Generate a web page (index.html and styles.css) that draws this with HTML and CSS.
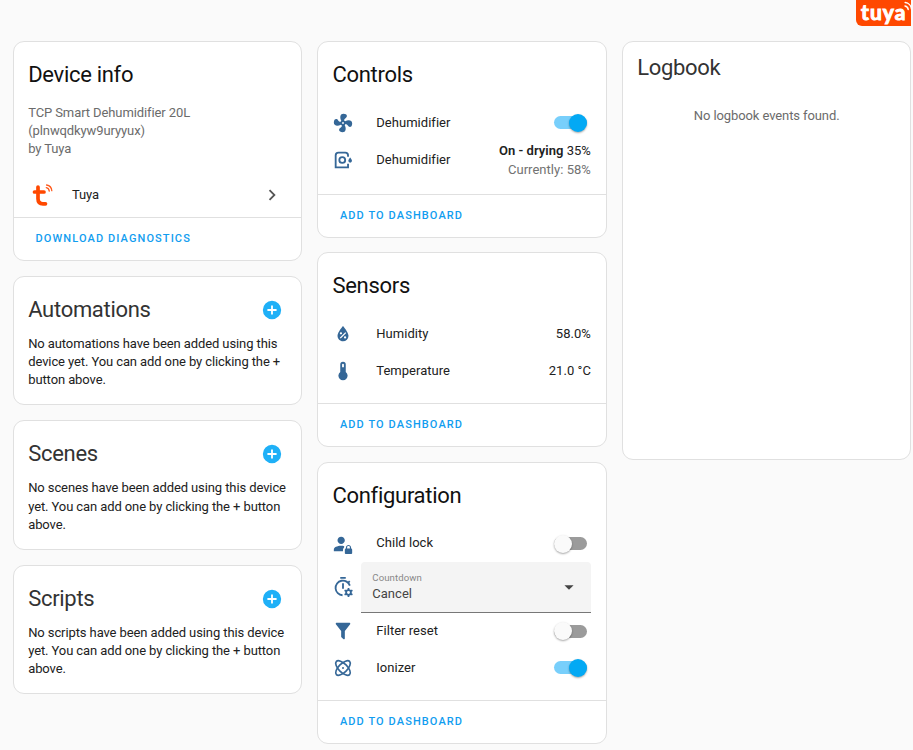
FILE: index.html
```
<!DOCTYPE html>
<html lang="en">

<head>
    <meta charset="utf-8">
    <meta name="viewport" content="width=device-width, initial-scale=1.0">
    <title>TCP Smart Dehumidifier 20L</title>
    <link rel="stylesheet" href="styles.css">
</head>

<body>

    <header class="brand">
        <div class="brand-logo">
            <span class="brand-text">tuya</span>
            <svg class="brand-waves" viewBox="0 0 10 12">
                <path d="M1 6a4 4 0 0 1 3.200 3.500M1.200 2.600a7 7 0 0 1 6.300 6.400" fill="none" stroke="#fff" stroke-width="1.5" stroke-linecap="round" />
            </svg>
        </div>
    </header>

    <main class="columns">
        <div class="column">
            <section class="card">
                <h1 class="title">Device info</h1>
                <div class="device">
                    <div>TCP Smart Dehumidifier 20L</div>
                    <div>(plnwqdkyw9uryyux)</div>
                    <div>by Tuya</div>
                </div>
                <a class="integration" href="#">
                    <svg class="tuya-icon" viewBox="0 0 22 24">
                        <path d="M2.5 9h9.5M6 4v11.800q0 5 5 5h2.500" fill="none" stroke="#ff4800" stroke-width="3.7" stroke-linecap="round" stroke-linejoin="round" />
                        <path d="M14.3 4.700q2.600.4 3 3.500M14.600 2q4.900.8 5.200 5.700" fill="none" stroke="#ff5a1c" stroke-width="1.3" stroke-linecap="round" />
                    </svg>
                    <span class="name">Tuya</span>
                    <svg class="icon chevron" viewBox="0 0 24 24"><path d="M8.59,16.58L13.17,12L8.59,7.41L10,6L16,12L10,18L8.59,16.58Z" /></svg>
                </a>
                <div class="actions"><a href="#">Download diagnostics</a></div>
            </section>

            <section class="card small">
                <h1 class="title soft">Automations
                    <svg class="icon add" viewBox="0 0 24 24"><path d="M17,13H13V17H11V13H7V11H11V7H13V11H17M12,2A10,10 0 0,0 2,12A10,10 0 0,0 12,22A10,10 0 0,0 22,12A10,10 0 0,0 12,2Z" /></svg>
                </h1>
                <p class="text">No automations have been added using this<br>device yet. You can add one by clicking the +<br>button above.</p>
            </section>

            <section class="card small">
                <h1 class="title soft">Scenes
                    <svg class="icon add" viewBox="0 0 24 24"><path d="M17,13H13V17H11V13H7V11H11V7H13V11H17M12,2A10,10 0 0,0 2,12A10,10 0 0,0 12,22A10,10 0 0,0 22,12A10,10 0 0,0 12,2Z" /></svg>
                </h1>
                <p class="text">No scenes have been added using this device<br>yet. You can add one by clicking the + button<br>above.</p>
            </section>

            <section class="card small">
                <h1 class="title soft">Scripts
                    <svg class="icon add" viewBox="0 0 24 24"><path d="M17,13H13V17H11V13H7V11H11V7H13V11H17M12,2A10,10 0 0,0 2,12A10,10 0 0,0 12,22A10,10 0 0,0 22,12A10,10 0 0,0 12,2Z" /></svg>
                </h1>
                <p class="text">No scripts have been added using this device<br>yet. You can add one by clicking the + button<br>above.</p>
            </section>
        </div>

        <div class="column">
            <section class="card">
                <h1 class="title">Controls</h1>
                <div class="rows">
                    <div class="row">
                        <svg class="icon" viewBox="0 0 24 24"><path d="M12,11A1,1 0 0,0 11,12A1,1 0 0,0 12,13A1,1 0 0,0 13,12A1,1 0 0,0 12,11M12.5,2C17,2 17.11,5.57 14.75,6.75C13.76,7.24 13.32,8.29 13.13,9.22C13.61,9.42 14.03,9.73 14.35,10.13C18.05,8.13 22.03,8.92 22.03,12.5C22.03,17 18.46,17.1 17.28,14.73C16.78,13.74 15.72,13.3 14.79,13.11C14.59,13.59 14.28,14 13.88,14.34C15.87,18.03 15.08,22 11.5,22C7,22 6.91,18.42 9.27,17.24C10.25,16.75 10.69,15.71 10.89,14.79C10.4,14.59 9.97,14.27 9.65,13.87C5.96,15.85 2,15.07 2,11.5C2,7 5.56,6.89 6.74,9.26C7.24,10.25 8.29,10.68 9.22,10.87C9.41,10.39 9.73,9.97 10.14,9.65C8.15,5.96 8.94,2 12.5,2Z" /></svg>
                        <span class="name">Dehumidifier</span>
                        <span class="switch on"></span>
                    </div>
                    <div class="row humidifier">
                        <svg class="icon" viewBox="0 0 24 24">
                            <path d="M17.500 8.500V7q0-3-3-3H7Q4 4 4 7v13h13.500v-4" fill="none" stroke="currentColor" stroke-width="2" />
                            <circle cx="11.200" cy="12" r="3.200" fill="none" stroke="currentColor" stroke-width="2" />
                            <path d="M19.800 9.300s-2 2.300-2 3.600a2 2 0 0 0 4 0c0-1.300-2-3.600-2-3.600" />
                        </svg>
                        <span class="name">Dehumidifier</span>
                        <div class="state">
                            <div><b>On - drying</b> 35%</div>
                            <div class="current">Currently: 58%</div>
                        </div>
                    </div>
                </div>
                <div class="actions"><a href="#">Add to dashboard</a></div>
            </section>

            <section class="card">
                <h1 class="title">Sensors</h1>
                <div class="rows">
                    <div class="row">
                        <svg class="icon" viewBox="0 0 24 24"><path d="M12,3.25C12,3.25 6,10 6,14C6,17.32 8.69,20 12,20A6,6 0 0,0 18,14C18,10 12,3.25 12,3.25M14.47,9.97L15.53,11.03L9.53,17.03L8.47,15.97M9.75,10A1.25,1.25 0 0,1 11,11.25A1.25,1.25 0 0,1 9.75,12.5A1.25,1.25 0 0,1 8.5,11.25A1.25,1.25 0 0,1 9.75,10M14.25,14.5A1.25,1.25 0 0,1 15.5,15.75A1.25,1.25 0 0,1 14.25,17A1.25,1.25 0 0,1 13,15.75A1.25,1.25 0 0,1 14.25,14.5Z" /></svg>
                        <span class="name">Humidity</span>
                        <span>58.0%</span>
                    </div>
                    <div class="row">
                        <svg class="icon" viewBox="0 0 24 24"><path d="M15 13V5A3 3 0 0 0 9 5V13A5 5 0 1 0 15 13M12 4A1 1 0 0 1 13 5V8H11V5A1 1 0 0 1 12 4Z" /></svg>
                        <span class="name">Temperature</span>
                        <span>21.0 °C</span>
                    </div>
                </div>
                <div class="actions"><a href="#">Add to dashboard</a></div>
            </section>

            <section class="card">
                <h1 class="title">Configuration</h1>
                <div class="rows">
                    <div class="row">
                        <svg class="icon" viewBox="0 0 24 24"><path d="M6 8C6 5.79 7.79 4 10 4S14 5.79 14 8 12.21 12 10 12 6 10.21 6 8M12 18.2C12 17.24 12.5 16.34 13.2 15.74V15.5C13.2 15.11 13.27 14.74 13.38 14.38C12.35 14.14 11.21 14 10 14C5.58 14 2 15.79 2 18V20H12V18.2M22 18.3V21.8C22 22.4 21.4 23 20.7 23H15.2C14.6 23 14 22.4 14 21.7V18.2C14 17.6 14.6 17 15.2 17V15.5C15.2 14.1 16.6 13 18 13C19.4 13 20.8 14.1 20.8 15.5V17C21.4 17 22 17.6 22 18.3M19.5 15.5C19.5 14.7 18.8 14.2 18 14.2C17.2 14.2 16.5 14.7 16.5 15.5V17H19.5V15.5Z" /></svg>
                        <span class="name">Child lock</span>
                        <span class="switch"></span>
                    </div>
                    <div class="row select-row">
                        <svg class="icon" viewBox="0 0 24 24">
                            <path d="M9 2h6M12 8v6M11.500 21A8 8 0 1 1 19.500 10.500M17.300 7.700l2-2" fill="none" stroke="currentColor" stroke-width="2" />
                            <circle cx="18" cy="18" r="2.600" fill="none" stroke="currentColor" stroke-width="2" />
                            <path d="M18 13v2.500M18 20.500V23M13.700 15.500l2.100 1.250M20.200 19.250l2.100 1.250M13.700 20.500l2.100-1.250M20.200 16.750l2.100-1.250" stroke="currentColor" stroke-width="1.900" />
                        </svg>
                        <div class="select">
                            <div class="select-value">
                                <div class="select-label">Countdown</div>
                                <div>Cancel</div>
                            </div>
                            <svg class="icon" viewBox="0 0 24 24"><path d="M7,10L12,15L17,10H7Z" /></svg>
                        </div>
                    </div>
                    <div class="row">
                        <svg class="icon" viewBox="0 0 24 24"><path d="M14,12V19.88C14.04,20.18 13.94,20.5 13.71,20.71C13.32,21.1 12.69,21.1 12.3,20.71L10.29,18.7C10.06,18.47 9.96,18.16 10,17.87V12H9.97L4.21,4.62C3.87,4.19 3.95,3.56 4.38,3.22C4.57,3.08 4.78,3 5,3V3H19V3C19.22,3 19.43,3.08 19.62,3.22C20.05,3.56 20.13,4.19 19.79,4.62L14.03,12H14Z" /></svg>
                        <span class="name">Filter reset</span>
                        <span class="switch"></span>
                    </div>
                    <div class="row">
                        <svg class="icon" viewBox="0 0 24 24">
                            <g fill="none" stroke="currentColor" stroke-width="1.800">
                                <ellipse cx="12" cy="12" rx="10.200" ry="4.700" transform="rotate(45 12 12)" />
                                <ellipse cx="12" cy="12" rx="10.200" ry="4.700" transform="rotate(-45 12 12)" />
                            </g>
                            <circle cx="12" cy="12" r="1.100" />
                        </svg>
                        <span class="name">Ionizer</span>
                        <span class="switch on"></span>
                    </div>
                </div>
                <div class="actions"><a href="#">Add to dashboard</a></div>
            </section>
        </div>

        <div class="column">
            <section class="card logbook">
                <h1 class="title soft">Logbook</h1>
                <p class="empty">No logbook events found.</p>
            </section>
        </div>
    </main>

</body>

</html>
```
FILE: styles.css
```
* {
    box-sizing: border-box;
}

body {
    margin: 0;
    height: 750px;
    overflow: hidden;
    background-color: #fafafa;
    color: #212121;
    font-family: Roboto, sans-serif;
    font-size: 13px;
    line-height: 18.2px;
    letter-spacing: -0.1px;
}

a {
    color: inherit;
    text-decoration: none;
}

.brand {
    display: flex;
    justify-content: flex-end;
    height: 41px;
    padding-right: 2px;
}

.brand-logo {
    display: flex;
    width: 55px;
    height: 26px;
    padding-left: 5px;
    background-color: #ff4800;
    border-radius: 0 0 0 6px;
}

.brand-text {
    color: #fff;
    font-family: Lato, sans-serif;
    font-size: 21px;
    font-weight: 700;
    line-height: 24px;
    letter-spacing: 1.1px;
    -webkit-text-stroke: 1px #fff;
}

.brand-waves {
    width: 10px;
    height: 12px;
    margin-left: -3px;
    flex-shrink: 0;
}

.columns {
    display: grid;
    grid-template-columns: 289px 290px 289px;
    column-gap: 15.3px;
    padding-left: 12.6px;
    align-items: start;
}

.column {
    display: flex;
    flex-direction: column;
    gap: 15px;
}

.card {
    background-color: #fff;
    border: 1px solid #e0e0e0;
    border-radius: 11px;
}

.title {
    display: flex;
    align-items: center;
    justify-content: space-between;
    margin: 0;
    padding: 11px 14.6px 0;
    height: 55px;
    color: #111;
    font-size: 22px;
    font-weight: 400;
    line-height: 44px;
    letter-spacing: -0.3px;
}

.soft {
    color: #333;
}

.icon {
    width: 22px;
    height: 22px;
    flex-shrink: 0;
    fill: currentColor;
}

.device {
    padding: 7px 14.6px 0;
    height: 75px;
    color: #6b6b6b;
}

.integration {
    display: flex;
    align-items: center;
    height: 45px;
    padding: 1px 18px 0;
}

.tuya-icon {
    width: 22px;
    height: 24px;
    margin-right: 18.4px;
}

.name {
    flex: 1;
}

.chevron {
    color: #555;
}

.actions {
    display: flex;
    align-items: center;
    height: 43px;
    padding: 1px 22px 0;
    border-top: 1px solid #e0e0e0;
    color: #119df0;
    font-size: 11px;
    font-weight: 500;
    letter-spacing: 1.1px;
    text-transform: uppercase;
}

.small {
    height: 129.3px;
}

.add {
    margin-right: 3px;
    color: #1fb0f7;
}

.text {
    margin: 0;
    padding: 3px 14.6px;
    white-space: nowrap;
}

.rows {
    padding: 7.6px 15px 14px;
    letter-spacing: 0.03px;
}

.row {
    display: flex;
    align-items: center;
    height: 36.6px;
}

.row > .icon {
    margin-right: 22.4px;
    margin-left: -1px;
    color: #356797;
}

.humidifier {
    height: 38.5px;
}

.state {
    padding-bottom: 1px;
    text-align: right;
    line-height: 19px;
}

.state b {
    font-weight: 600;
}

.current {
    color: #727272;
}

.switch {
    display: flex;
    align-items: center;
    width: 33px;
    height: 13px;
    margin-right: 4px;
    border-radius: 7px;
    background-color: #9b9b9b;
}

.switch::before {
    content: "";
    width: 18px;
    height: 18px;
    border-radius: 50%;
    background-color: #fafafa;
    box-shadow: 0 1px 2px rgba(0, 0, 0, 0.35);
}

.switch.on {
    justify-content: flex-end;
    background-color: #78cffb;
}

.switch.on::before {
    background-color: #03a9f4;
}

.select-row {
    height: 51px;
}

.select-row > .icon {
    margin-right: 7.4px;
}

.select {
    display: flex;
    flex: 1;
    align-items: center;
    height: 51px;
    padding: 0 11px;
    background-color: #f4f4f4;
    border-bottom: 1px solid #777;
    border-radius: 4px 4px 0 0;
    color: #444;
}

.select-value {
    flex: 1;
    padding-bottom: 2px;
    line-height: 15.5px;
}

.select-label {
    color: #888;
    font-size: 9.6px;
    letter-spacing: 0.1px;
}

.column:nth-child(2) {
    gap: 14.6px;
}

.logbook {
    height: 418.5px;
}

.logbook .title {
    padding-top: 0;
    padding-left: 14px;
    height: 52px;
}

.empty {
    margin: 0;
    padding-top: 13px;
    color: #6b6b6b;
    text-align: center;
}
```
